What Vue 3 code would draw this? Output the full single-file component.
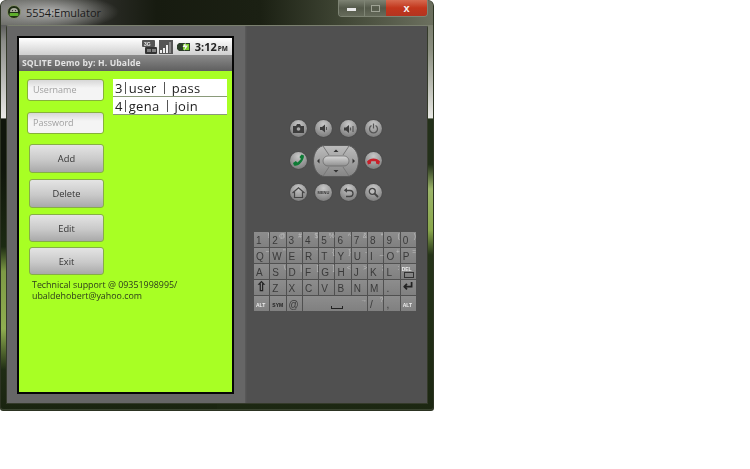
<script setup>
const topButtons = ['camera', 'voldown', 'volup', 'power']
const bottomButtons = ['home', 'menu', 'back', 'search']
const fields = ['Username', 'Password']
const actions = ['Add', 'Delete', 'Edit', 'Exit']
const rows = [
  { id: 3, a: 'user', b: 'pass' },
  { id: 4, a: 'gena', b: 'join' }
]
const keys = [
  ['1', '!'], ['2', '@'], ['3', '#'], ['4', '$'], ['5', '%'], ['6', '^'], ['7', '&'], ['8', '*'], ['9', '('], ['0', ')'],
  ['Q', '~'], ['W', '"'], ['E', '´'], ['R', '`'], ['T', '{'], ['Y', '}'], ['U', '-'], ['I', '_'], ['O', '+'], ['P', '='],
  ['A', ''], ['S', '\\'], ['D', '|'], ['F', '['], ['G', ']'], ['H', '<'], ['J', '>'], ['K', ';'], ['L', ':'], ['DEL', '', 'del'],
  ['⇧', '', 'shift'], ['Z', ''], ['X', ''], ['C', ''], ['V', ''], ['B', ''], ['N', ''], ['M', ''], ['.', ''], ['↵', '', 'enter'],
  ['ALT', '', 'small'], ['SYM', '', 'small sym'], ['@', ''], ['', '→', 'space'], ['/', '?'], [',', ''], ['ALT', '', 'small']
]
</script>

<template>
  <div class="page">
    <div class="window">
      <header class="titlebar">
        <svg class="app-icon" width="14" height="14" viewBox="0 0 14 14">
          <circle cx="7" cy="7" r="6.5" fill="#1d2c12" stroke="#8a9170" />
          <path d="M3 7a4 4 0 0 1 8 0z" fill="#a9ab9c" />
          <rect x="2.5" y="8" width="9" height="3" rx="1" fill="#5fae2c" />
          <circle cx="5.5" cy="5.6" r=".6" fill="#222" />
          <circle cx="8.5" cy="5.6" r=".6" fill="#222" />
        </svg>
        <span class="title">5554:Emulator</span>
        <div class="controls">
          <span class="ctl min"><i></i></span>
          <span class="ctl max"><i></i></span>
          <span class="ctl close">x</span>
        </div>
      </header>

      <main class="client">
        <section class="device-pane">
          <div class="phone">
            <div class="status">
              <svg width="15" height="14" viewBox="0 0 15 14">
                <rect x="0" y="0" width="13" height="7" rx="1" fill="#555" />
                <rect x="3" y="7" width="12" height="7" rx="1" fill="#333" />
                <text x="2" y="6" class="mini">3G</text>
                <path d="M6 9v3M8 9v3M11 9v3M13 9v3" stroke="#ccc" />
              </svg>
              <svg width="14" height="14" viewBox="0 0 14 14">
                <rect width="14" height="14" fill="#555" />
                <path d="M1 13h2v-3H1zM4 13h2V8H4zM7 13h2V5H7z" fill="#eee" />
                <path d="M10 13h2V2h-2z" fill="#888" />
              </svg>
              <svg class="battery" width="15" height="11" viewBox="0 0 15 11">
                <path d="M1 4 3 2h11v8H3L1 8z" fill="#2b3d28" />
                <path d="M7 3h6v6H7z" fill="#7ccc2a" />
                <path d="M9.500 1.500 6.500 6H9l-1 4 4-5.500H9.500z" fill="#f2f2f2" />
              </svg>
              <span class="clock">3:12<small>PM</small></span>
            </div>
            <div class="app-title">SQLITE Demo by: H. Ubalde</div>
            <div class="app-body">
              <div class="form-row">
                <div class="form">
                  <div v-for="f in fields" :key="f" class="field">{{ f }}</div>
                  <button v-for="a in actions" :key="a" class="btn" type="button">{{ a }}</button>
                </div>
                <div class="table">
                  <div v-for="r in rows" :key="r.id" class="row">
                    <span>{{ r.id }}</span><span class="sep"></span><span>{{ r.a }}</span>
                    <span class="sep gap"></span><span>{{ r.b }}</span>
                  </div>
                </div>
              </div>
              <p class="support">Technical support @ 09351998995/<br />ubaldehobert@yahoo.com</p>
            </div>
          </div>
        </section>

        <section class="control-pane">
          <div class="cluster">
            <div class="round-row">
              <span v-for="b in topButtons" :key="b" class="round">
                <svg v-if="b === 'camera'" width="11" height="9" viewBox="0 0 11 9">
                  <path d="M0 2h3l1-2h3l1 2h3v7H0z" fill="#3c3c3c" />
                  <circle cx="5.500" cy="5" r="1.800" fill="#aaa" />
                </svg>
                <svg v-else-if="b === 'voldown'" width="9" height="9" viewBox="0 0 9 9">
                  <path d="M1 3h2l3-2.500v8L3 6H1z" fill="#3c3c3c" />
                  <path d="M7.500 3v3" stroke="#555" />
                </svg>
                <svg v-else-if="b === 'volup'" width="12" height="10" viewBox="0 0 12 10">
                  <path d="M1 3.500h2L6 1v8L3 6.500H1z" fill="#3c3c3c" />
                  <path d="M7.500 3.500v3M10 2v6" stroke="#555" stroke-width="1.200" fill="none" />
                </svg>
                <svg v-else width="11" height="11" viewBox="0 0 11 11">
                  <path d="M3.500 2.500a4 4 0 1 0 4 0" stroke="#555" stroke-width="1.300" fill="none" />
                  <path d="M5.500 .5v5" stroke="#555" stroke-width="1.300" />
                </svg>
              </span>
            </div>

            <div class="nav-row">
              <span class="round">
                <svg width="13" height="13" viewBox="0 0 13 13">
                  <path d="M12 1.500 9.500 .5 7.500 3 9 5 5.500 8.500 3.800 7 1 9l1 2.500c4 1.500 10-4 10-10z" fill="#0e7a35" />
                </svg>
              </span>
              <div class="dpad">
                <svg width="46" height="32" viewBox="0 0 46 32">
                  <defs>
                    <linearGradient id="padFill" x1="0" y1="0" x2="0" y2="1">
                      <stop offset="0" stop-color="#bdbdbd" />
                      <stop offset="1" stop-color="#858585" />
                    </linearGradient>
                    <linearGradient id="okFill" x1="0" y1="0" x2="0" y2="1">
                      <stop offset="0" stop-color="#d8d8d8" />
                      <stop offset="1" stop-color="#8f8f8f" />
                    </linearGradient>
                  </defs>
                  <path d="M12 .5h22C41 .5 45.500 8 45.500 16S41 31.500 34 31.500H12C5 31.500 .5 24 .5 16S5 .5 12 .5z" fill="url(#padFill)" stroke="#5a5a5a" />
                  <path d="M10 1 16 10M36 1 30 10M10 31 16 22M36 31 30 22" stroke="#777" />
                  <rect x="10" y="11" width="26" height="10" rx="5" fill="url(#okFill)" stroke="#666" stroke-width=".7" />
                  <path d="M23 4.500 20.500 7h5zM23 27.500 20.500 25h5zM4 16l2.500-2.500v5zM42 16l-2.500-2.500v5z" fill="#333" />
                </svg>
              </div>
              <span class="round">
                <svg width="13" height="8" viewBox="0 0 13 8">
                  <path d="M0 4.500C3 .5 10 .5 13 4.500L12 7.500 9 6.500 9 4.500C7.500 4 5.500 4 4 4.500L4 6.500 1 7.500z" fill="#c8202a" />
                </svg>
              </span>
            </div>

            <div class="round-row">
              <span v-for="b in bottomButtons" :key="b" class="round">
                <svg v-if="b === 'home'" width="13" height="11" viewBox="0 0 13 11">
                  <path d="M.5 6 6.500 .8 12.500 6M2.500 5v5.500h8V5" stroke="#444" stroke-width="1.200" fill="none" />
                </svg>
                <span v-else-if="b === 'menu'" class="menu-label">MENU</span>
                <svg v-else-if="b === 'back'" width="11" height="11" viewBox="0 0 11 11">
                  <path d="M3 3.500h4a3 3 0 0 1 0 6H3" stroke="#444" stroke-width="1.300" fill="none" />
                  <path d="M4 .8v5L.8 3.300z" fill="#444" />
                </svg>
                <svg v-else width="11" height="11" viewBox="0 0 11 11">
                  <circle cx="4.300" cy="4.300" r="3" stroke="#444" stroke-width="1.300" fill="#bbb" />
                  <path d="m6.500 6.500 3.500 3.500" stroke="#444" stroke-width="1.800" />
                </svg>
              </span>
            </div>
          </div>

          <div class="keyboard">
            <div v-for="(k, i) in keys" :key="i" class="key" :class="k[2]">
              <span v-if="k[0]" class="cap">{{ k[0] }}</span>
              <span v-if="k[1]" class="hint">{{ k[1] }}</span>
            </div>
          </div>
        </section>
      </main>
    </div>
  </div>
</template>

<style>
html, body { margin: 0; background: #fff; }
</style>

<style scoped>
.page {
  width: 750px;
  height: 469px;
  overflow: hidden;
  background: #fff;
  font-family: "Open Sans", "Noto Sans", sans-serif;
}
.window {
  box-sizing: border-box;
  width: 434px;
  height: 411px;
  padding: 0 6px 7px;
  border-radius: 6px 6px 3px 3px;
  background:
    linear-gradient(180deg, #5a5a5a 0 6%, #8b8c88 10%, #e9e9e6 28.6%, #10160b 29%, #10160b 41%, #1c2a12 60%, #7d9a45 66%, #8fae50 80%, #1f2c14 90%, #1a2410 100%) left / 50% 100% no-repeat,
    linear-gradient(180deg, #6c705f 0, #8b8f80 12%, #e8e8e4 28.6%, #23301a 29%, #23301a 40%, #9cb56a 46%, #8aa84c 56%, #26341a 62%, #1c2712 100%) right / 50% 100% no-repeat;
  box-shadow: inset 0 0 0 1px #2c3322, inset 0 -1px 0 1px #3a4430;
}
.titlebar {
  display: flex;
  align-items: center;
  height: 25px;
  margin: 0 -5px;
  padding: 0 6px 1px;
  box-sizing: border-box;
  border-radius: 6px 6px 0 0;
  background:
    radial-gradient(ellipse 70px 18px at 48px 12px, rgba(205,205,205,.8), rgba(205,205,205,0) 100%),
    linear-gradient(90deg, #6d6e69 0, #2a2b26 24%, #171b10 36%, #1b2013 60%, #3e4433 78%, #6c705f 100%);
}
.app-icon { flex: none; }
.title {
  margin-left: 5px;
  font-size: 11px;
  color: #1b1b1b;
}
.controls {
  display: flex;
  align-self: flex-start;
  margin-left: auto;
  height: 16px;
  border: 1px solid #7e8474;
  border-top: 0;
  border-radius: 0 0 4px 4px;
  overflow: hidden;
  margin-right: -1px;
}
.ctl {
  display: flex;
  align-items: center;
  justify-content: center;
  height: 100%;
  background: linear-gradient(180deg, #7e8374, #54594a 50%, #666b5b);
}
.min { width: 25px; }
.min i { width: 9px; height: 3px; margin-top: 3px; background: #e8e8e8; }
.max { width: 21px; border-left: 1px solid #7e8474; }
.max i { width: 7px; height: 5px; border: 1px solid #9ea294; }
.close {
  width: 41px;
  background: linear-gradient(180deg, #d66a50, #c2361c 50%, #b33420);
  color: #f4f4f4;
  font: 700 11px/1 "Liberation Sans", sans-serif;
}
.client {
  display: flex;
  height: 379px;
  border: 1px solid #343a2a;
  border-top-color: #7a7f6e;
  box-sizing: border-box;
  border-radius: 3px 3px 0 0;
}
.device-pane {
  box-sizing: border-box;
  width: 238px;
  padding: 10px 0 0 10px;
  background: #666;
}
.phone {
  box-sizing: border-box;
  width: 217px;
  height: 358px;
  display: flex;
  flex-direction: column;
  border: 2px solid #060606;
  filter: blur(.4px);
}
.status {
  display: flex;
  align-items: center;
  justify-content: flex-end;
  gap: 2px;
  height: 17px;
  padding-right: 4px;
  background: linear-gradient(180deg, #fff, #cfcfcf);
}
.battery { margin-left: 1px; }
.mini { font: 700 5px "Liberation Sans", sans-serif; fill: #eee; }
.clock {
  margin-left: 2px;
  font: 700 11px "Open Sans", sans-serif;
  color: #222;
}
.clock small { margin-left: 1px; font-size: 6.500px; }
.app-title {
  box-sizing: border-box;
  height: 16px;
  padding-left: 3px;
  background: linear-gradient(180deg, #8b8b8b, #5f5f5f);
  color: #e2e2e2;
  font: 700 8.600px/16px "Open Sans", sans-serif;
  letter-spacing: .14px;
  white-space: nowrap;
}
.app-body {
  flex: 1;
  background: #a8ff24;
}
.form-row {
  display: flex;
  padding: 8px 5px 0 8px;
}
.form {
  display: flex;
  flex-direction: column;
  align-items: flex-end;
  width: 77px;
}
.field {
  box-sizing: border-box;
  width: 77px;
  height: 22px;
  padding-left: 5px;
  margin-bottom: 11px;
  border: 1px solid #87b23a;
  border-radius: 3px;
  background: linear-gradient(180deg, #d7d7d7, #f4f4f4 40%);
  color: #a0a0a0;
  font-size: 9px;
  line-height: 20px;
}
.field:nth-child(2) { margin-bottom: 10px; }
.btn {
  box-sizing: border-box;
  width: 75px;
  height: 29px;
  margin: 0 0 6px;
  padding: 0;
  border: 1px solid #86ad47;
  border-radius: 3px;
  background: linear-gradient(180deg, #e4e4e4, #c9c9c9 55%, #a9a9a9);
  color: #333;
  font: 9.300px "Open Sans", sans-serif;
}
.btn:nth-of-type(n+3) { height: 28px; margin-bottom: 5px; }
.btn:last-child { margin-bottom: 0; }
.table {
  width: 114px;
  margin-left: 9px;
}
.row {
  display: flex;
  align-items: center;
  box-sizing: border-box;
  height: 18px;
  padding-left: 2px;
  background: #fff;
  border-bottom: 1px solid #8a9a7a;
  color: #222;
  font-size: 13px;
  letter-spacing: .3px;
}
.sep {
  width: 1px;
  height: 12px;
  margin: 0 3px 0 2px;
  background: #555;
}
.sep.gap { margin: 0 7px; }
.support {
  margin: 4px 0 0 13px;
  color: #2c3a1c;
  font-size: 8.900px;
  line-height: 11px;
}
.control-pane {
  flex: 1;
  background: #505050;
  box-shadow: inset 2px 0 2px -1px #5c5c5c;
}
.cluster {
  display: flex;
  flex-direction: column;
  margin: 94px 0 0 45px;
  width: 92px;
  gap: 15px;
  filter: blur(.3px);
}
.round-row, .nav-row {
  display: flex;
  align-items: center;
  justify-content: space-between;
  height: 17px;
}
.round {
  display: flex;
  flex: none;
  align-items: center;
  justify-content: center;
  width: 17px;
  height: 17px;
  border-radius: 50%;
  background: radial-gradient(circle at 50% 25%, #c8c8c8, #808080 80%);
  box-shadow: 0 0 1px #333;
}
.dpad { display: flex; flex: none; }
.menu-label {
  color: #333;
  font: 700 4px "Liberation Sans", sans-serif;
}
.keyboard {
  display: grid;
  grid-template-columns: repeat(10, 15.300px);
  grid-auto-rows: 15px;
  gap: 1px;
  width: 165px;
  margin: 31px 0 0 9px;
  filter: blur(.45px);
}
.key {
  position: relative;
  background: linear-gradient(180deg, #8d8d8d, #808080);
  color: #3a3a3a;
  font: 10px/11px "Liberation Sans", sans-serif;
}
.cap { position: absolute; left: 2px; top: 3px; }
.hint {
  position: absolute;
  right: 0;
  top: 0;
  color: #bdbdbd;
  font-size: 6.500px;
  line-height: 7px;
}
.space { grid-column: span 4; }
.space::after {
  content: "";
  position: absolute;
  left: 28px;
  bottom: 2px;
  width: 10px;
  height: 2px;
  border: 1px solid #222;
  border-top: 0;
}
.small .cap { left: 2px; top: 4px; color: #eee; font-size: 5px; font-weight: 700; }
.sym .cap { color: #222; }
.del .cap { left: 1px; top: 0; color: #eee; font-size: 5px; font-weight: 700; }
.del::after {
  content: "";
  position: absolute;
  left: 3px;
  top: 8px;
  width: 8px;
  height: 4px;
  border: 1px solid #333;
}
.shift .cap { left: 2px; top: 1px; font-size: 13px; font-weight: 700; color: #222; }
.enter .cap { left: 2px; top: 1px; font-size: 14px; font-weight: 700; color: #222; }
</style>
